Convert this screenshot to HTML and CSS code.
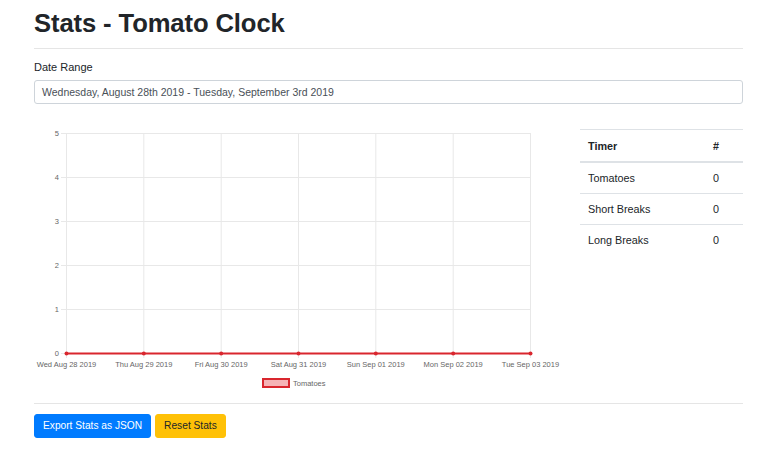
FILE: index.html
```html
<!DOCTYPE html>
<html lang="en">
<head>
<meta charset="utf-8">
<title>Stats - Tomato Clock</title>
<link rel="stylesheet" href="styles.css">
</head>
<body>
<div class="container">
  <h1 class="title">Stats - Tomato Clock</h1>
  <hr class="rule rule-top">
  <label class="field-label" for="range">Date Range</label>
  <div class="input" id="range">Wednesday, August 28th 2019 - Tuesday, September 3rd 2019</div>

  <div class="row">
    <div class="chart-col">
      <svg class="chart" width="546" height="264" viewBox="0 0 546 264" xmlns="http://www.w3.org/2000/svg">
        <g stroke="#e8e8e8" stroke-width="1">
          <line x1="27" y1="4.5" x2="496" y2="4.5"/>
          <line x1="27" y1="48.5" x2="496" y2="48.5"/>
          <line x1="27" y1="92.5" x2="496" y2="92.5"/>
          <line x1="27" y1="136.5" x2="496" y2="136.5"/>
          <line x1="27" y1="180.5" x2="496" y2="180.5"/>
          <line x1="27" y1="224.5" x2="496" y2="224.5"/>
          <line x1="32.5" y1="4" x2="32.5" y2="229"/>
          <line x1="109.8" y1="4" x2="109.8" y2="229"/>
          <line x1="187.2" y1="4" x2="187.2" y2="229"/>
          <line x1="264.5" y1="4" x2="264.5" y2="229"/>
          <line x1="341.8" y1="4" x2="341.8" y2="229"/>
          <line x1="419.2" y1="4" x2="419.2" y2="229"/>
          <line x1="496.5" y1="4" x2="496.5" y2="229"/>
        </g>
        <g class="tick" text-anchor="end">
          <text x="25" y="7">5</text>
          <text x="25" y="51">4</text>
          <text x="25" y="95">3</text>
          <text x="25" y="139">2</text>
          <text x="25" y="183">1</text>
          <text x="25" y="227">0</text>
        </g>
        <g class="tick" text-anchor="middle">
          <text x="32.5" y="238">Wed Aug 28 2019</text>
          <text x="109.8" y="238">Thu Aug 29 2019</text>
          <text x="187.2" y="238">Fri Aug 30 2019</text>
          <text x="264.5" y="238">Sat Aug 31 2019</text>
          <text x="341.8" y="238">Sun Sep 01 2019</text>
          <text x="419.2" y="238">Mon Sep 02 2019</text>
          <text x="496.5" y="238">Tue Sep 03 2019</text>
        </g>
        <line x1="32.5" y1="224.5" x2="496.5" y2="224.5" stroke="#d9262e" stroke-width="2"/>
        <g fill="#d9262e">
          <circle cx="32.5" cy="224.5" r="2"/>
          <circle cx="109.8" cy="224.5" r="2"/>
          <circle cx="187.2" cy="224.5" r="2"/>
          <circle cx="264.5" cy="224.5" r="2"/>
          <circle cx="341.8" cy="224.5" r="2"/>
          <circle cx="419.2" cy="224.5" r="2"/>
          <circle cx="496.5" cy="224.5" r="2"/>
        </g>
        <rect x="229" y="250" width="26" height="8" fill="#f5b3b6" stroke="#d9262e" stroke-width="2"/>
        <text class="tick" x="259" y="257">Tomatoes</text>
      </svg>
    </div>
    <div class="table-col">
      <table class="table">
        <thead>
          <tr><th class="c-name">Timer</th><th class="c-num">#</th></tr>
        </thead>
        <tbody>
          <tr><td>Tomatoes</td><td>0</td></tr>
          <tr><td>Short Breaks</td><td>0</td></tr>
          <tr><td>Long Breaks</td><td>0</td></tr>
        </tbody>
      </table>
    </div>
  </div>

  <hr class="rule rule-bottom">
  <div class="buttons">
    <button class="btn btn-primary" type="button">Export Stats as JSON</button>
    <button class="btn btn-warning" type="button">Reset Stats</button>
  </div>
</div>
</body>
</html>
```

FILE: styles.css
```css
* { box-sizing: border-box; }

html, body {
  margin: 0;
  padding: 0;
  background: #fff;
}

body {
  font-family: "Liberation Sans", Arial, sans-serif;
  font-size: 11px;
  line-height: 16px;
  color: #212529;
}

.container {
  width: 709px;
  margin-left: 34px;
}

.title {
  margin: 8px 0 0;
  font-size: 25.6px;
  line-height: 31px;
  font-weight: 700;
  letter-spacing: -0.1px;
}

.rule {
  border: 0;
  border-top: 1px solid rgba(0, 0, 0, 0.1);
  margin: 0;
}

.rule-top { margin-top: 9px; }

.field-label {
  display: block;
  margin-top: 10px;
  font-size: 11px;
  line-height: 16px;
}

.input {
  margin-top: 5px;
  height: 24px;
  border: 1px solid #ced4da;
  border-radius: 3px;
  padding: 0 7px;
  line-height: 22px;
  color: #495057;
  font-size: 10.5px;
}

.row {
  display: flex;
  margin-top: 25px;
  gap: 20px;
}

.chart-col {
  width: 526px;
  height: 264px;
}

.chart {
  display: block;
  overflow: visible;
}

.tick {
  font-family: "Liberation Sans", Arial, sans-serif;
  font-size: 7.5px;
  fill: #666;
}

.table-col {
  width: 163px;
}

.table {
  width: 163px;
  border-collapse: collapse;
}

.table th,
.table td {
  text-align: left;
  padding: 7px 8px;
  line-height: 16px;
  border-top: 1px solid #dee2e6;
  font-size: 10.8px;
}

.table thead th {
  padding-top: 8px;
  border-bottom: 2px solid #dee2e6;
  font-weight: 700;
}

.c-name { width: 125px; }

.rule-bottom { margin-top: 10px; }

.buttons {
  display: flex;
  gap: 4px;
  margin-top: 10px;
}

.btn {
  height: 24px;
  padding: 0 8px;
  border: 1px solid transparent;
  border-radius: 3px;
  font-family: "Liberation Sans", Arial, sans-serif;
  font-size: 10.2px;
  line-height: 22px;
}

.btn-primary {
  background: #007bff;
  border-color: #007bff;
  color: #fff;
}

.btn-warning {
  background: #ffc107;
  border-color: #ffc107;
  color: #212529;
}
```
